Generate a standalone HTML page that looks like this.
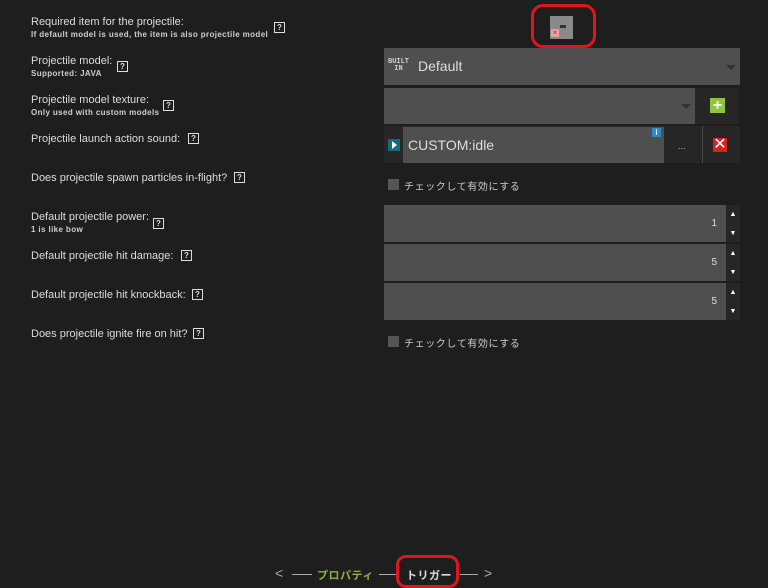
<!DOCTYPE html><html><head><meta charset="utf-8"><style>
body{margin:0;width:768px;height:586px;background:#1e1e1e;font-family:"Liberation Sans","Noto Sans CJK JP",sans-serif;color:#d8d8d8;position:relative;overflow:hidden}
.a{position:absolute}
.l{font-size:11px;color:#dcdcdc;white-space:nowrap}
.s{font-size:8px;font-weight:bold;color:#cfcfcf;white-space:nowrap;letter-spacing:0.38px}
.q{position:absolute;width:9px;height:9px;border:1px solid #ddd;font-size:8px;font-weight:bold;line-height:9px;text-align:center;color:#ddd}
.f{position:absolute;background:#4f4f4f}
.d{position:absolute;background:#262626}
.cb{position:absolute;width:11px;height:11px;background:#555}
.ct{position:absolute;font-size:10px;color:#ccc;letter-spacing:0.6px}
.num{position:absolute;right:20px;font-size:10px;color:#ddd}
.sp{color:#fff;font-size:7px;text-align:center;line-height:19px}
</style></head><body>
<div class="a l" style="left:31px;top:16px">Required item for the projectile:</div>
<div class="a s" style="left:31px;top:30px">If default model is used, the item is also projectile model</div>
<div class="q" style="left:274px;top:22px">?</div>
<div class="a l" style="left:31px;top:55px">Projectile model:</div>
<div class="a s" style="left:31px;top:69px">Supported: JAVA</div>
<div class="q" style="left:117px;top:61px">?</div>
<div class="a l" style="left:31px;top:94px">Projectile model texture:</div>
<div class="a s" style="left:31px;top:108px">Only used with custom models</div>
<div class="q" style="left:163px;top:100px">?</div>
<div class="a l" style="left:31px;top:133px">Projectile launch action sound:</div>
<div class="q" style="left:188px;top:133px">?</div>
<div class="a l" style="left:31px;top:172px">Does projectile spawn particles in-flight?</div>
<div class="q" style="left:234px;top:172px">?</div>
<div class="a l" style="left:31px;top:211px">Default projectile power:</div>
<div class="a s" style="left:31px;top:225px">1 is like bow</div>
<div class="q" style="left:153px;top:218px">?</div>
<div class="a l" style="left:31px;top:250px">Default projectile hit damage:</div>
<div class="q" style="left:181px;top:250px">?</div>
<div class="a l" style="left:31px;top:289px">Default projectile hit knockback:</div>
<div class="q" style="left:192px;top:289px">?</div>
<div class="a l" style="left:31px;top:328px">Does projectile ignite fire on hit?</div>
<div class="q" style="left:193px;top:328px">?</div>

<div class="a" style="left:531px;top:4px;width:59px;height:38px;border:3px solid #e0161e;border-radius:12px"></div>
<div class="a" style="left:550px;top:16px;width:23px;height:23px;background:#8a8a8a"></div>
<div class="a" style="left:551px;top:29px;width:8px;height:8px;background:#e8a0a0;color:#c22;font-size:8px;line-height:8px;text-align:center">×</div>
<div class="a" style="left:560px;top:25px;width:6px;height:3px;background:#333"></div>

<div class="f" style="left:384px;top:48px;width:356px;height:37px"></div>
<div class="a" style="left:388px;top:59px;font:bold 7px 'Liberation Mono',monospace;color:#ccc;line-height:7px;text-align:center">BUILT<br>IN</div>
<div class="a" style="left:418px;top:58px;font-size:14px;color:#ddd">Default</div>
<div class="a" style="left:726px;top:65px;border:5px solid transparent;border-top:5px solid #333"></div>

<div class="f" style="left:384px;top:88px;width:311px;height:36px"></div>
<div class="a" style="left:681px;top:104px;border:5px solid transparent;border-top:5px solid #333"></div>
<div class="d" style="left:695px;top:88px;width:44px;height:36px"></div>
<div class="a" style="left:710px;top:98px;width:15px;height:15px;background:#8cc63f;color:#fff;font:bold 16px/15px 'Liberation Sans';text-align:center">+</div>

<div class="d" style="left:384px;top:126px;width:356px;height:37px"></div>
<div class="a" style="left:388px;top:139px;width:12px;height:12px;background:#176a7a"></div>
<div class="a" style="left:392px;top:141px;border:4px solid transparent;border-left:5px solid #fff;border-right:0"></div>
<div class="f" style="left:403px;top:127px;width:261px;height:36px"></div>
<div class="a" style="left:408px;top:137px;font-size:14px;color:#ddd">CUSTOM:idle</div>
<div class="a" style="left:652px;top:128px;width:9px;height:9px;background:#2a8bc8;color:#fff;font:bold 8px/9px 'Liberation Sans';text-align:center">i</div>
<div class="a" style="left:678px;top:141px;font-size:9px;color:#bbb">...</div>
<div class="a" style="left:702px;top:126px;width:1px;height:37px;background:#4a4a4a"></div>
<div class="a" style="left:713px;top:138px;width:14px;height:14px;background:#d0241c;color:#fff;font:16px/14px 'Liberation Sans';text-align:center">✕</div>

<div class="cb" style="left:388px;top:179px"></div>
<div class="ct" style="left:404px;top:178px">チェックして有効にする</div>

<div class="f" style="left:384px;top:205px;width:342px;height:37px"><span class="num" style="right:9px;top:13px">1</span></div>
<div class="d sp" style="left:726px;top:205px;width:14px;height:37px">▲<br>▼</div>
<div class="f" style="left:384px;top:244px;width:342px;height:37px"><span class="num" style="right:9px;top:13px">5</span></div>
<div class="d sp" style="left:726px;top:244px;width:14px;height:37px">▲<br>▼</div>
<div class="f" style="left:384px;top:283px;width:342px;height:37px"><span class="num" style="right:9px;top:13px">5</span></div>
<div class="d sp" style="left:726px;top:283px;width:14px;height:37px">▲<br>▼</div>

<div class="cb" style="left:388px;top:336px"></div>
<div class="ct" style="left:404px;top:335px">チェックして有効にする</div>

<div class="a" style="left:275px;top:565px;font-size:14px;color:#aaa">&lt;</div>
<div class="a" style="left:292px;top:574px;width:20px;height:1px;background:#aaa"></div>
<div class="a" style="left:317px;top:567px;font-size:11px;font-weight:bold;color:#8bb33a;letter-spacing:0.5px">プロパティ</div>
<div class="a" style="left:379px;top:574px;width:18px;height:1px;background:#aaa"></div>
<div class="a" style="left:406px;top:567px;font-size:11px;font-weight:bold;color:#ddd;letter-spacing:0.5px">トリガー</div>
<div class="a" style="left:460px;top:574px;width:18px;height:1px;background:#aaa"></div>
<div class="a" style="left:484px;top:565px;font-size:14px;color:#aaa">&gt;</div>
<div class="a" style="left:396px;top:555px;width:57px;height:27px;border:3px solid #e0161e;border-radius:10px"></div>
</body></html>
